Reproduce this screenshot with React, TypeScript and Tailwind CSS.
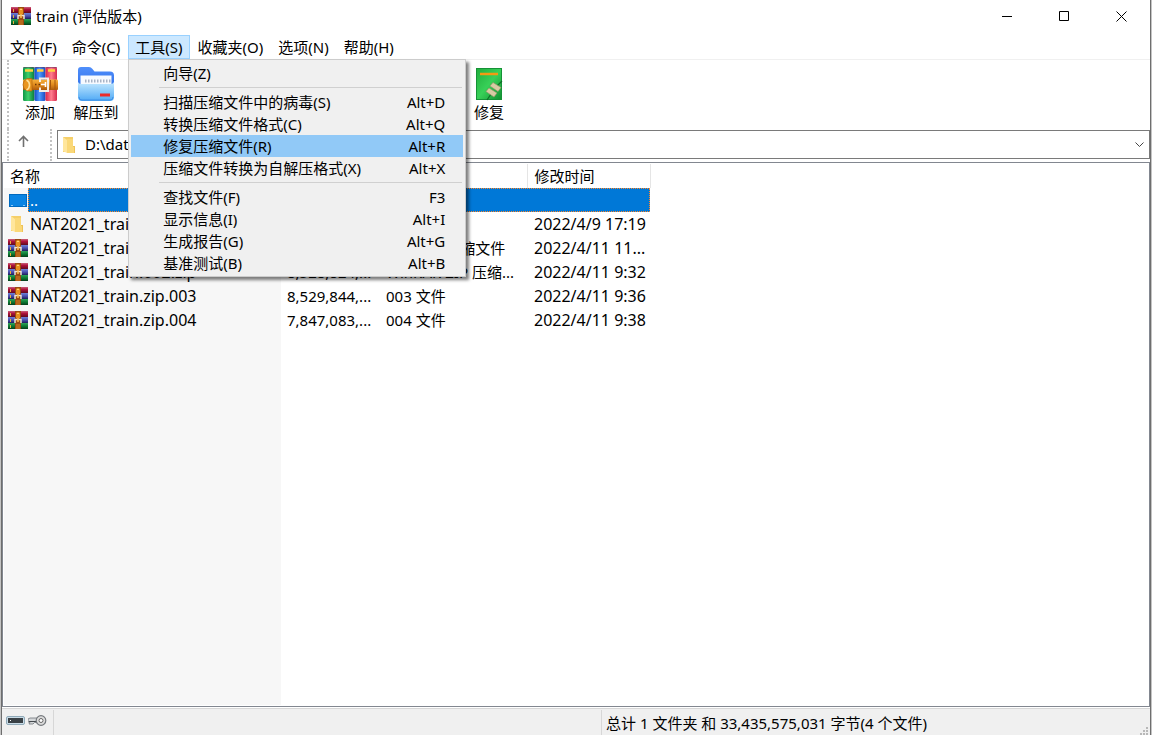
import React from 'react';

const BookStack = () => (
  <svg viewBox="0 0 20 18" className="h-[18px] w-5 shrink-0" aria-hidden="true">
    <defs>
      <linearGradient id="stackRed" x1="0" y1="0" x2="0" y2="1">
        <stop offset="0" stopColor="#c9627c" />
        <stop offset="0.4" stopColor="#b0123b" />
        <stop offset="1" stopColor="#5e0a20" />
      </linearGradient>
      <linearGradient id="stackBlue" x1="0" y1="0" x2="0" y2="1">
        <stop offset="0" stopColor="#6f83d6" />
        <stop offset="0.5" stopColor="#4a4fb0" />
        <stop offset="1" stopColor="#1d1c58" />
      </linearGradient>
      <linearGradient id="stackGreen" x1="0" y1="0" x2="0" y2="1">
        <stop offset="0" stopColor="#2fa35a" />
        <stop offset="0.5" stopColor="#0c7a33" />
        <stop offset="1" stopColor="#063d1a" />
      </linearGradient>
    </defs>
    <rect width="20" height="6" fill="url(#stackRed)" />
    <rect y="6" width="20" height="6" fill="url(#stackBlue)" />
    <rect y="12" width="20" height="6" fill="url(#stackGreen)" />
    <path d="M2.5 2v3M2.5 8v3M2.5 14v3" stroke="#e8b33c" strokeWidth="1" />
    <rect x="7" width="6" height="18" fill="#9a4a12" />
    <path d="M8 2q2-2 4 0v5H8z" fill="#e8901e" />
    <path d="M9 2.500h2" stroke="#ffd27a" strokeWidth="1" />
    <path d="M7 12V8.500h6V12" fill="none" stroke="#e9e2d8" strokeWidth="1.5" />
    <path d="M10 7v4" stroke="#ffc04d" strokeWidth="1.5" />
    <path d="M8 13h4v5H8z" fill="#b8681c" />
  </svg>
);

const AddIcon = () => (
  <svg viewBox="0 0 36 36" className="h-9 w-9" aria-hidden="true">
    <defs>
      <linearGradient id="bookGreen">
        <stop offset="0" stopColor="#0e9444" />
        <stop offset="0.45" stopColor="#3fd06c" />
        <stop offset="1" stopColor="#0b7a3a" />
      </linearGradient>
      <linearGradient id="bookBlue">
        <stop offset="0" stopColor="#1549c4" />
        <stop offset="0.45" stopColor="#4b9bff" />
        <stop offset="1" stopColor="#1a48bd" />
      </linearGradient>
      <linearGradient id="bookRed">
        <stop offset="0" stopColor="#dc2547" />
        <stop offset="0.5" stopColor="#ff7d8e" />
        <stop offset="1" stopColor="#d52a4c" />
      </linearGradient>
      <linearGradient id="belt" x1="0" y1="0" x2="0" y2="1">
        <stop offset="0" stopColor="#f7b13d" />
        <stop offset="0.5" stopColor="#e08a1c" />
        <stop offset="1" stopColor="#ad5a0c" />
      </linearGradient>
    </defs>
    <rect x="1" y="1" width="11.500" height="34" rx="1.5" fill="url(#bookGreen)" />
    <rect x="12.500" y="1" width="11" height="34" rx="1.5" fill="url(#bookBlue)" />
    <rect x="23.500" y="1" width="11.500" height="34" rx="1.5" fill="url(#bookRed)" />
    <path d="M1 1.500h34" stroke="#5a3460" strokeOpacity="0.500" />
    <path d="M3 4.500h8M15 4.500h6.500M26 4.500h7" stroke="#ffd23f" strokeWidth="2.6" />
    <rect x="1" y="13.500" width="35" height="10.500" rx="1" fill="url(#belt)" />
    <path d="M5 12.500h5v12.500H5q-4-2-4-6.200t4-6.300z" fill="#e9951f" stroke="#a65a0c" strokeWidth="0.600" />
    <path d="M4.500 14c4 2 4 8 0 10" fill="none" stroke="#ffe09a" strokeWidth="1.500" />
    <path d="M13 18.500h1.500M16.500 18.500h1.500" stroke="#6e3504" strokeWidth="1.500" />
    <path d="M18 16v-3.500h8v12.500h-8V21.500" fill="none" stroke="#f3eee6" strokeWidth="2" />
    <path d="M19 18.500h4M23.500 16v5" stroke="#fff" strokeWidth="1.600" />
    <path d="M28.500 14v9.500M33 14v9.500" stroke="#a4560c" strokeWidth="1" />
  </svg>
);

const ExtractIcon = () => (
  <svg viewBox="0 0 36 36" className="h-9 w-9" aria-hidden="true">
    <defs>
      <linearGradient id="folderBack" x1="0" y1="0" x2="0" y2="1">
        <stop offset="0" stopColor="#4f8ffb" />
        <stop offset="1" stopColor="#2461e0" />
      </linearGradient>
      <linearGradient id="folderFront" x1="0" y1="0" x2="0" y2="1">
        <stop offset="0" stopColor="#c4e9ff" />
        <stop offset="1" stopColor="#4fa9f5" />
      </linearGradient>
    </defs>
    <path d="M0 31V4q0-3 3-3h8q2 0 3.500 2l2 2.500H32q4 0 4 4V31z" fill="url(#folderBack)" />
    <path d="M2.500 9.500h31V20h-31z" fill="#f7faff" />
    <path d="M7 15h26" stroke="#a9b4c6" strokeWidth="3" strokeDasharray="1.500 1.500" />
    <path d="M0 16q1 2 3 2h30q2 0 3-2v15q0 4-4 4H4q-4 0-4-4z" fill="url(#folderFront)" />
    <path d="M1 31q0 3 3 3h28q3 0 3-3" fill="none" stroke="#3f8fe6" />
    <rect x="22" y="27.500" width="10" height="3" fill="#ec2b2b" />
  </svg>
);

const RepairIcon = () => (
  <svg viewBox="0 0 36 36" className="h-9 w-9" aria-hidden="true">
    <defs>
      <linearGradient id="repairBook" x1="0" y1="0" x2="1" y2="1">
        <stop offset="0" stopColor="#1fae3c" />
        <stop offset="0.5" stopColor="#38d058" />
        <stop offset="1" stopColor="#109030" />
      </linearGradient>
    </defs>
    <rect x="5.500" y="2.500" width="25" height="31" fill="url(#repairBook)" stroke="#159236" />
    <path d="M9 8h18" stroke="#f39a12" strokeWidth="2.500" />
    <path d="M31 15l-5 5M20 28l-4 6" stroke="#0f6e28" strokeWidth="1.200" />
    <path d="M19 20l3-3.500 8 5-3 4z" fill="#d8cba4" stroke="#9c8f68" strokeWidth="0.600" />
    <path d="M15 25.500l3-3.500 8 5-3 4z" fill="#d8cba4" stroke="#9c8f68" strokeWidth="0.600" />
  </svg>
);

const FolderIcon = () => (
  <svg viewBox="0 0 20 20" className="h-5 w-5 shrink-0" aria-hidden="true">
    <path d="M3 2h10v15H3z" fill="#f5cf69" />
    <path d="M12 11h3v7h-3z" fill="#eec257" />
    <path d="M3 2l4 3v13l-4-2z" fill="#ffe69c" />
    <path d="M7 4h6v8h1v6H7z" fill="#fad878" />
  </svg>
);

const ParentIcon = () => (
  <svg viewBox="0 0 20 20" className="h-5 w-5 shrink-0" aria-hidden="true">
    <rect x="1.500" y="4.500" width="17" height="12" fill="#0a84e3" stroke="#0069be" />
    <path d="M3 15.500h2M15 15.500h2" stroke="#8cc8f7" />
  </svg>
);

const menus = ['文件(F)', '命令(C)', '工具(S)', '收藏夹(O)', '选项(N)', '帮助(H)'];

const toolItems = [
  [{ label: '向导(Z)', keys: '' }],
  [
    { label: '扫描压缩文件中的病毒(S)', keys: 'Alt+D' },
    { label: '转换压缩文件格式(C)', keys: 'Alt+Q' },
    { label: '修复压缩文件(R)', keys: 'Alt+R' },
    { label: '压缩文件转换为自解压格式(X)', keys: 'Alt+X' },
  ],
  [
    { label: '查找文件(F)', keys: 'F3' },
    { label: '显示信息(I)', keys: 'Alt+I' },
    { label: '生成报告(G)', keys: 'Alt+G' },
    { label: '基准测试(B)', keys: 'Alt+B' },
  ],
];

const files = [
  { name: 'NAT2021_train', size: '', type: '文件夹', time: '2022/4/9 17:19', folder: true },
  { name: 'NAT2021_train.001', size: '8,529,844,...', type: 'WinRAR 压缩文件', time: '2022/4/11 11...' },
  { name: 'NAT2021_train.002.zip', size: '8,528,824,...', type: 'WinRAR ZIP 压缩...', time: '2022/4/11 9:32' },
  { name: 'NAT2021_train.zip.003', size: '8,529,844,...', type: '003 文件', time: '2022/4/11 9:36' },
  { name: 'NAT2021_train.zip.004', size: '7,847,083,...', type: '004 文件', time: '2022/4/11 9:38' },
];

const TitleBar: React.FC = () => (
  <header className="flex h-[35px] items-center">
    <div className="flex items-center gap-[5px] pb-[3px] pl-[9px]">
      <BookStack />
      <h1>train (评估版本)</h1>
    </div>
    <div className="ml-auto flex h-8 self-start">
      <button aria-label="最小化" className="flex w-[57px] items-center justify-center">
        <svg width="11" height="11" stroke="#000"><path d="M0 5.500h10" /></svg>
      </button>
      <button aria-label="最大化" className="flex w-[57px] items-center justify-center">
        <svg width="11" height="11" stroke="#000" fill="none"><path d="M.5.5h9v9h-9z" /></svg>
      </button>
      <button aria-label="关闭" className="flex w-[57px] items-center justify-center">
        <svg width="11" height="11" stroke="#000"><path d="M.5.5l10 10M10.500.5l-10 10" /></svg>
      </button>
    </div>
  </header>
);

const ToolsMenu: React.FC = () => (
  <div role="menu" className="absolute top-full left-0 z-10 w-[338px] border border-[#cccccc] bg-[#f0f0f0] p-[2px] shadow-[3px_3px_3px_rgba(0,0,0,0.5)]">
    {toolItems.map((group, i) => (
      <div key={i}>
        {i > 0 && <div className="mr-px ml-7 h-[7px] py-[3px]"><div className="h-px bg-[#d0d0d0]" /></div>}
        {group.map((item) => (
          <button
            key={item.label}
            role="menuitem"
            className={`flex h-[22px] w-full items-center justify-between pr-[18px] pl-8 whitespace-nowrap ${item.keys === 'Alt+R' ? 'bg-[#91c9f7]' : ''}`}
          >
            <span>{item.label}</span>
            <span>{item.keys}</span>
          </button>
        ))}
      </div>
    ))}
  </div>
);

const MenuBar: React.FC = () => (
  <nav className="flex h-[25px] gap-px border-b border-[#f0f0f0] pl-px">
    {menus.map((menu) =>
      menu === '工具(S)' ? (
        <div key={menu} className="relative">
          <button className="h-6 border border-[#99d1ff] bg-[#cce8ff] px-[6px]">{menu}</button>
          <ToolsMenu />
        </div>
      ) : (
        <button key={menu} className="h-6 px-[7px]">{menu}</button>
      ),
    )}
  </nav>
);

const Toolbar: React.FC = () => (
  <div className="ml-[5px] flex h-[69px] border-l-2 border-dotted border-[#c3c3c3] pt-[6px] pl-[3px]">
    <button className="flex w-14 flex-col items-center"><AddIcon /><span className="leading-5">添加</span></button>
    <button className="flex w-14 flex-col items-center"><ExtractIcon /><span className="leading-5">解压到</span></button>
    <button className="ml-[337px] flex w-14 flex-col items-center"><RepairIcon /><span className="leading-5">修复</span></button>
  </div>
);

const AddressBar: React.FC = () => (
  <div className="ml-[5px] flex h-8 border-l-2 border-dotted border-[#c3c3c3]">
    <button aria-label="上一级" className="flex w-[41px] items-center justify-center pr-3 pb-2">
      <svg width="11" height="12" fill="none" stroke="#707070" strokeWidth="1.600"><path d="M5.500 12V1.500M1 6l4.500-4.500L10 6" /></svg>
    </button>
    <div className="flex min-w-0 flex-1 border-l-2 border-dotted border-[#c3c3c3] pl-[5px]">
      <div className="mt-px flex h-[29px] min-w-0 flex-1 items-center border border-[#7a7a7a] pl-[2px]">
        <FolderIcon />
        <input aria-label="地址" defaultValue="D:\dataset\train" className="ml-[5px] min-w-0 flex-1 pb-[2px] outline-none" />
        <button aria-label="展开" className="flex h-full w-5 items-center justify-center">
          <svg width="9" height="6" fill="none" stroke="#444"><path d="M.5.500l4 4 4-4" /></svg>
        </button>
      </div>
    </div>
  </div>
);

const FileList: React.FC = () => (
  <main className="mt-px flex min-h-0 flex-1 flex-col border border-[#828790] bg-white p-px">
    <table className="w-[646px] table-fixed border-collapse text-left whitespace-nowrap">
      <thead>
        <tr className="h-6">
          <th className="w-[277px] pl-[6px] font-normal">名称</th>
          <th className="w-[99px] pl-[6px] font-normal">大小</th>
          <th className="w-[147px] border-r border-[#e5e5e5] pl-[6px] font-normal">类型</th>
          <th className="w-[123px] border-r border-[#e5e5e5] pl-[7px] font-normal">修改时间</th>
        </tr>
      </thead>
      <tbody>
        <tr className="h-6 text-white">
          <td className="bg-[#f7f7f7] p-0">
            <div className="flex h-6 items-center pl-1">
              <ParentIcon />
              <span className="h-6 flex-1 border border-r-0 border-dotted border-[#ff8728] bg-[#0078d7] pl-px leading-[22px]">..</span>
            </div>
          </td>
          <td colSpan={3} className="p-0">
            <div className="h-6 border border-l-0 border-dotted border-[#ff8728] bg-[#0078d7]" />
          </td>
        </tr>
        {files.map((file) => (
          <tr key={file.name} className="h-6">
            <td className="bg-[#f7f7f7] p-0">
              <div className="flex h-6 items-center gap-[2px] pl-1">
                {file.folder ? <FolderIcon /> : <BookStack />}
                <span className="pb-px text-base leading-5">{file.name}</span>
              </div>
            </td>
            <td className="p-0 pl-[6px]">{file.size}</td>
            <td className="p-0 pl-[6px]">{file.type}</td>
            <td className="p-0 pb-px pl-[7px] text-base leading-5">{file.time}</td>
          </tr>
        ))}
      </tbody>
    </table>
    <div className="w-[277px] flex-1 bg-[#f7f7f7]" />
  </main>
);

const StatusBar: React.FC = () => (
  <footer className="mt-px flex h-[27px] border-t border-[#d7d7d7] bg-[#f0f0f0] pt-px">
    <div className="flex w-[52px] items-start gap-[3px] border-r border-[#d7d7d7] pt-1 pl-1">
      <svg width="19" height="13" aria-hidden="true">
        <rect x=".5" y="2.500" width="18" height="8" rx="1.500" fill="#c9dbe6" stroke="#8fa9b8" />
        <rect x="2" y="4" width="15" height="5" fill="#3a4146" />
        <path d="M4 6.500h1" stroke="#fff" />
      </svg>
      <svg width="19" height="13" aria-hidden="true">
        <path d="M0 5l2-1h8v4.500H6.500L5 10H1l1-2H0z" fill="#d5d8da" stroke="#70757a" strokeWidth=".8" />
        <path d="M1 7.500h7" stroke="#44494d" />
        <circle cx="13" cy="6.500" r="4.800" fill="#dcdcdc" stroke="#75797d" strokeWidth="1.200" />
        <circle cx="13" cy="6.500" r="2" fill="#fff" stroke="#666" />
      </svg>
    </div>
    <div className="w-[548px] border-r border-[#d7d7d7]" />
    <p className="flex-1 pl-1 leading-[26px]">总计 1 文件夹 和 33,435,575,031 字节(4 个文件)</p>
    <svg width="8" height="8" fill="#b8b8b8" className="mr-[2px] self-end" aria-hidden="true">
      <path d="M6 0h2v2H6zM3 3h2v2H3zM6 3h2v2H6zM0 6h2v2H0zM3 6h2v2H3zM6 6h2v2H6z" />
    </svg>
  </footer>
);

const App: React.FC = () => {
  return (
    <div className="h-screen overflow-hidden bg-[#c4c4c4] px-px font-['Noto_Sans','Noto_Sans_CJK_SC',sans-serif] text-[15px] leading-5 text-black">
      <div className="flex h-full flex-col border-x border-[#6e6e6e] bg-white">
        <TitleBar />
        <MenuBar />
        <Toolbar />
        <AddressBar />
        <FileList />
        <StatusBar />
      </div>
    </div>
  );
};

export default App;
